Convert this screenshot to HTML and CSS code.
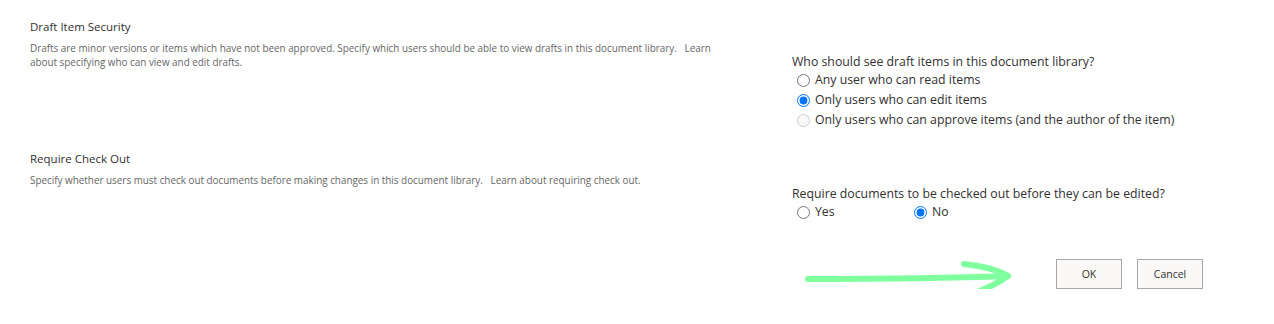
FILE: index.html
```html
<!DOCTYPE html>
<html lang="en">
<head>
  <meta charset="UTF-8">
  <title>Library Settings - Versioning</title>
  <link rel="stylesheet" href="styles.css">
</head>
<body>
  <div class="page">
    <div class="section">
      <div class="info">
        <h3>Draft Item Security</h3>
        <p>Drafts are minor versions or items which have not been approved. Specify which users should be able to view drafts in this document library.&nbsp;&nbsp; Learn about specifying who can view and edit drafts.</p>
      </div>
      <div class="control">
        <div class="question">Who should see draft items in this document library?</div>
        <label class="choice"><input type="radio" name="draft">Any user who can read items</label>
        <label class="choice"><input type="radio" name="draft" checked>Only users who can edit items</label>
        <label class="choice"><input type="radio" name="draft" disabled>Only users who can approve items (and the author of the item)</label>
      </div>
    </div>

    <div class="section">
      <div class="info">
        <h3>Require Check Out</h3>
        <p>Specify whether users must check out documents before making changes in this document library.&nbsp;&nbsp; Learn about requiring check out.</p>
      </div>
      <div class="control">
        <div class="question">Require documents to be checked out before they can be edited?</div>
        <div class="inline-choices">
          <label class="choice yes"><input type="radio" name="checkout">Yes</label>
          <label class="choice"><input type="radio" name="checkout" checked>No</label>
        </div>
      </div>
    </div>

    <div class="buttons">
      <svg class="arrow" width="220" height="50" viewBox="0 0 220 50">
        <path d="M4 30 C60 30 150 29 204 27 M160 15 C178 17 194 21 204 27 C194 34 180 41 167 45" fill="none" stroke="#80ff9f" stroke-width="6" stroke-linecap="round" stroke-linejoin="round"/>
      </svg>
      <button class="btn">OK</button>
      <button class="btn">Cancel</button>
    </div>
  </div>
</body>
</html>
```

FILE: styles.css
```css
body {
  margin: 0;
  background-color: #fff;
  font-family: "Open Sans", "Noto Sans", sans-serif;
  color: #323130;
}
.page {
  padding: 19px 71px 0 30px;
}
.section {
  display: flex;
  margin-bottom: 21px;
}
.info {
  width: 700px;
}
.info h3 {
  margin: 0;
  font-size: 11.5px;
  font-weight: normal;
  line-height: 16px;
  color: #323130;
}
.info p {
  margin: 6px 0 0;
  font-size: 9.9px;
  line-height: 14px;
  color: #666;
}
.control {
  margin-left: 62px;
  padding-top: 34px;
  font-size: 12.3px;
}
.question {
  line-height: 17px;
}
.choice {
  display: flex;
  align-items: center;
  height: 20px;
  line-height: 20px;
}
.choice input {
  margin: 0 5px 0 5px;
}
.inline-choices {
  display: flex;
}
.choice.yes {
  width: 117px;
}
.buttons {
  position: relative;
  display: flex;
  justify-content: flex-end;
  gap: 15px;
  margin-top: 37px;
}
.btn {
  width: 66px;
  height: 30px;
  background-color: #faf9f8;
  border: 1px solid #a6a6a6;
  font-family: inherit;
  font-size: 10.5px;
  color: #323130;
}
.arrow {
  position: absolute;
  left: 774px;
  top: -10px;
}
```
